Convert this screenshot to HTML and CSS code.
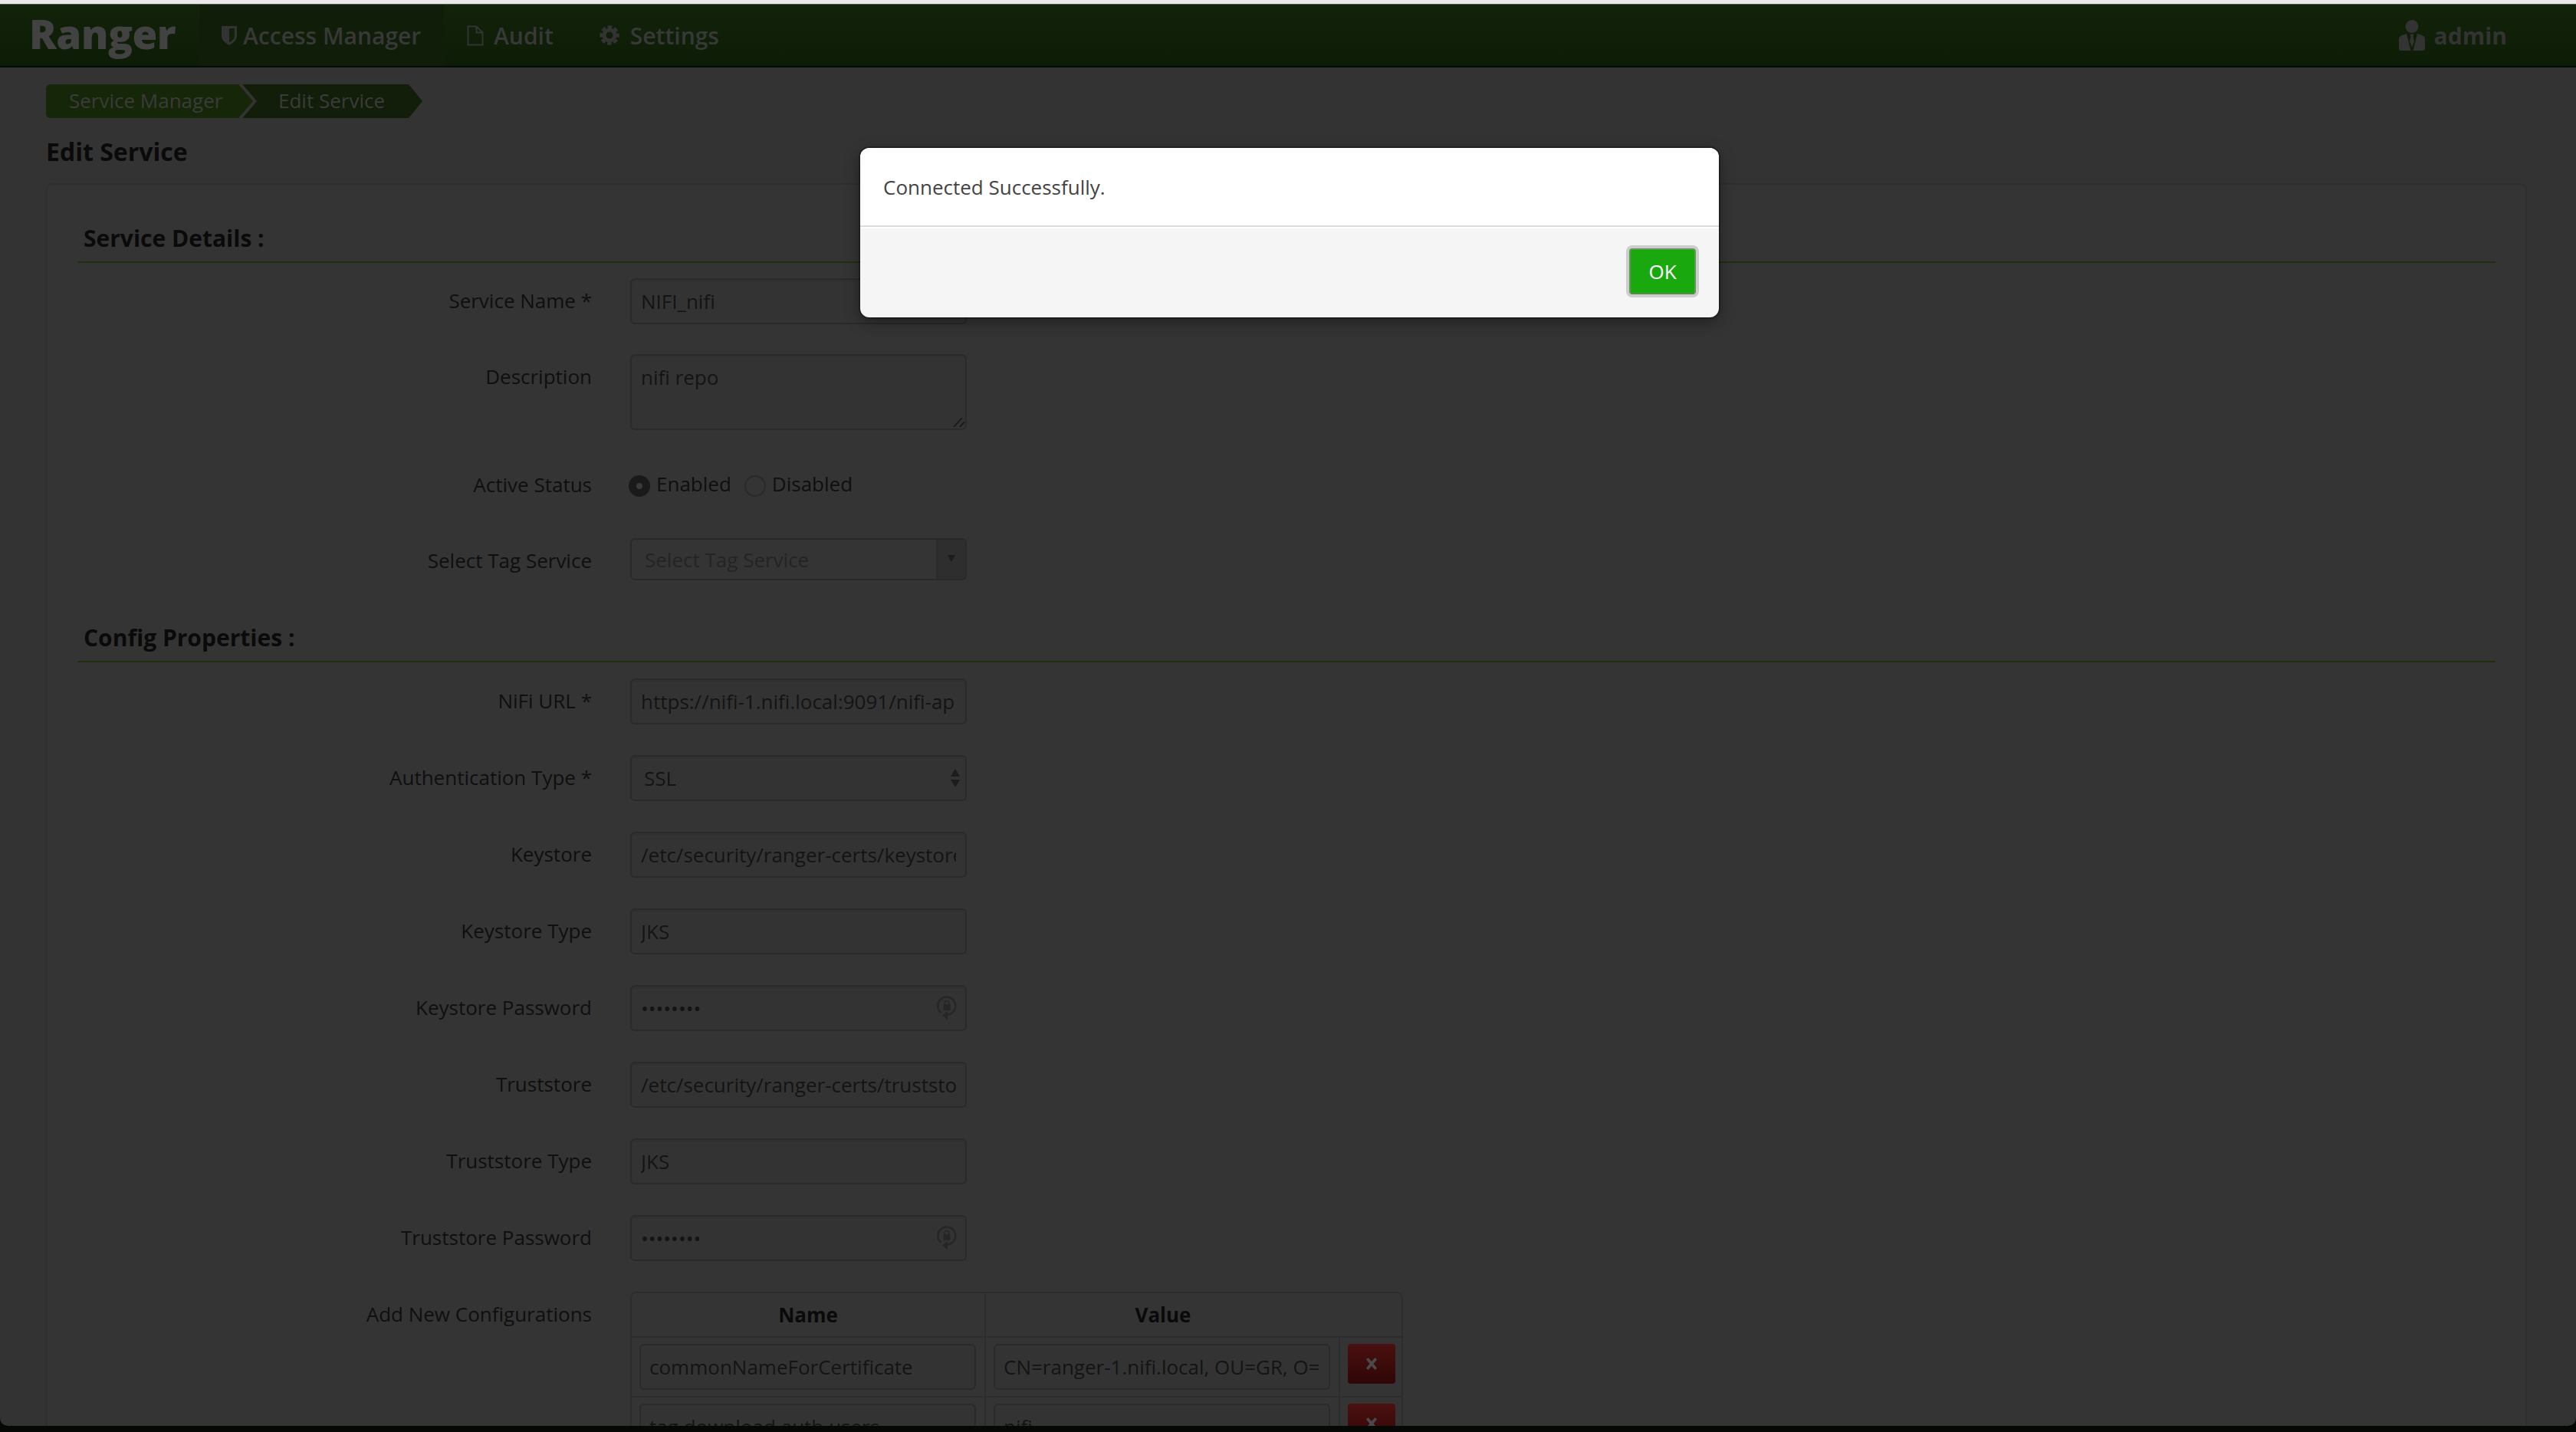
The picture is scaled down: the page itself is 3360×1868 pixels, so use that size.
FILE: index.html
```html
<!DOCTYPE html>
<html lang="en">
<head>
<meta charset="utf-8">
<title>Ranger - Edit Service</title>
<link rel="stylesheet" href="styles.css">
</head>
<body>
<div class="window">
  <div class="titlestrip"></div>
  <header class="navbar">
    <div class="brand">Ranger</div>
    <nav class="navlinks">
      <a class="navlink active">
        <svg class="ico-shield" viewBox="0 0 20 26"><path fill="#333" d="M0 1h20v13c0 6-6 9.500-10 12C6 23.500 0 20 0 14z"/><path fill="#11210a" d="M10 4h7v10c0 4-4 6.500-7 8.500z"/></svg>
        <span>Access Manager</span>
      </a>
      <a class="navlink">
        <svg class="ico-file" viewBox="0 0 22 27"><path fill="none" stroke="#333" stroke-width="2" d="M1.500 1.500h11l8 8v16h-19zM12.500 1.500v8h8"/></svg>
        <span>Audit</span>
      </a>
      <a class="navlink">
        <svg class="ico-cog" viewBox="0 0 26 26"><circle cx="13" cy="13" r="7" fill="none" stroke="#333" stroke-width="5"/><circle cx="13" cy="13" r="10.500" fill="none" stroke="#333" stroke-width="4.500" stroke-dasharray="5.500 2.750" stroke-dashoffset="2.750"/></svg>
        <span>Settings</span>
      </a>
    </nav>
    <div class="user">
      <svg class="ico-user" viewBox="0 0 34 41"><circle cx="17" cy="8.500" r="8.500" fill="#333"/><path fill="#333" d="M10 18 15.500 40H3c-2 0-3-1-3-3V24c0-3 6-5 10-6zM24 18 18.500 40H31c2 0 3-1 3-3V24c0-3-6-5-10-6zM14.500 18.500h5l-1 3 1.500 6.500-3 7.500-3-7.500 1.500-6.500z"/></svg>
      <span>admin</span>
    </div>
  </header>

  <main class="main">
    <div class="crumbs">
      <div class="crumb crumb-first">Service Manager</div>
      <div class="crumb crumb-last">Edit Service</div>
    </div>
    <h1 class="pagetitle">Edit Service</h1>

    <section class="panel">
      <h2 class="sectiontitle">Service Details :</h2>

      <div class="row row-name">
        <label class="fieldlabel">Service Name *</label>
        <input class="field" type="text" value="NIFI_nifi">
      </div>
      <div class="row row-desc">
        <label class="fieldlabel">Description</label>
        <div class="areawrap">
          <textarea class="field area">nifi repo</textarea>
          <svg class="ico-grip" viewBox="0 0 15 12"><path fill="none" stroke="#161616" stroke-width="1.500" d="M1 12 12 0M9 12 15 5"/></svg>
        </div>
      </div>
      <div class="row row-status">
        <label class="fieldlabel status-label">Active Status</label>
        <div class="radios">
          <span class="radio on"></span><span class="radiotext">Enabled</span>
          <span class="radio"></span><span class="radiotext">Disabled</span>
        </div>
      </div>
      <div class="row row-tag">
        <label class="fieldlabel">Select Tag Service</label>
        <div class="tagselect">
          <span class="tagtext">Select Tag Service</span>
          <span class="tagarrow"><svg class="ico-down" viewBox="0 0 10 10"><path fill="#1c1c1c" d="M0 1h10L5 10z"/></svg></span>
        </div>
      </div>

      <h2 class="sectiontitle second">Config Properties :</h2>

      <div class="row">
        <label class="fieldlabel">NiFi URL *</label>
        <input class="field" type="text" value="https://nifi-1.nifi.local:9091/nifi-api/resources">
      </div>
      <div class="row">
        <label class="fieldlabel">Authentication Type *</label>
        <div class="field authselect">
          <span>SSL</span>
          <svg class="ico-updown" viewBox="0 0 12 24"><path fill="#1c1c1c" d="M6 0l6 10H0zM0 14h12L6 24z"/></svg>
        </div>
      </div>
      <div class="row">
        <label class="fieldlabel">Keystore</label>
        <input class="field" type="text" value="/etc/security/ranger-certs/keystore.jks">
      </div>
      <div class="row">
        <label class="fieldlabel">Keystore Type</label>
        <input class="field" type="text" value="JKS">
      </div>
      <div class="row">
        <label class="fieldlabel">Keystore Password</label>
        <div class="pwdwrap">
          <input class="field pwd" type="password" value="password">
          <svg class="ico-key" viewBox="0 0 26 32"><path fill="none" stroke="#262626" stroke-width="2.500" d="M5.500 22A11.500 11.500 0 1 1 14 24.500"/><path fill="#262626" d="M14 20v11l-7-5.500z"/><path fill="none" stroke="#262626" stroke-width="1.500" d="M10 11V9.500a3 3 0 0 1 6 0V11"/><rect x="8.500" y="11" width="9" height="8" rx="1" fill="#262626"/></svg>
        </div>
      </div>
      <div class="row">
        <label class="fieldlabel">Truststore</label>
        <input class="field" type="text" value="/etc/security/ranger-certs/truststore.jks">
      </div>
      <div class="row">
        <label class="fieldlabel">Truststore Type</label>
        <input class="field" type="text" value="JKS">
      </div>
      <div class="row">
        <label class="fieldlabel">Truststore Password</label>
        <div class="pwdwrap">
          <input class="field pwd" type="password" value="password">
          <svg class="ico-key" viewBox="0 0 26 32"><path fill="none" stroke="#262626" stroke-width="2.500" d="M5.500 22A11.500 11.500 0 1 1 14 24.500"/><path fill="#262626" d="M14 20v11l-7-5.500z"/><path fill="none" stroke="#262626" stroke-width="1.500" d="M10 11V9.500a3 3 0 0 1 6 0V11"/><rect x="8.500" y="11" width="9" height="8" rx="1" fill="#262626"/></svg>
        </div>
      </div>
      <div class="row">
        <label class="fieldlabel">Add New Configurations</label>
        <table class="configs">
          <thead>
            <tr><th class="colname">Name</th><th class="colvalue">Value</th><th class="colaction"></th></tr>
          </thead>
          <tbody>
            <tr>
              <td><input class="cellfield" type="text" value="commonNameForCertificate"></td>
              <td><input class="cellfield" type="text" value="CN=ranger-1.nifi.local, OU=GR, O=Hortonworks"></td>
              <td class="actioncell"><button class="remove"><svg class="ico-x" viewBox="0 0 14 16"><path fill="#4a4a4a" d="M0 2.500 2.500 0 7 5l4.500-5L14 2.500 9.500 8l4.500 5.500-2.500 2.500L7 11l-4.500 5L0 13.500 4.500 8z"/></svg></button></td>
            </tr>
            <tr>
              <td><input class="cellfield" type="text" value="tag.download.auth.users"></td>
              <td><input class="cellfield" type="text" value="nifi"></td>
              <td class="actioncell"><button class="remove"><svg class="ico-x" viewBox="0 0 14 16"><path fill="#4a4a4a" d="M0 2.500 2.500 0 7 5l4.500-5L14 2.500 9.500 8l4.500 5.500-2.500 2.500L7 11l-4.500 5L0 13.500 4.500 8z"/></svg></button></td>
            </tr>
          </tbody>
        </table>
      </div>
    </section>
  </main>

  <div class="modal">
    <div class="modalbody">Connected Successfully.</div>
    <div class="modalfoot"><button class="okbtn">OK</button></div>
  </div>
</div>
</body>
</html>
```

FILE: styles.css
```css
* { box-sizing: border-box; }

html, body {
  margin: 0;
  height: 1868px;
  overflow: hidden;
  background: #050805;
}

body {
  font-family: "Open Sans", "Liberation Sans", sans-serif;
  font-size: 26px;
  color: #0f0f0f;
}

.window {
  position: relative;
  height: 1860px;
  overflow: hidden;
  background: #333;
  border-radius: 0 0 10px 10px;
}

.titlestrip {
  height: 6px;
  background: #e9e9e9;
  border-bottom: 1px solid #555;
}

/* navbar */
.navbar {
  display: flex;
  align-items: stretch;
  height: 82px;
  background: linear-gradient(#12230a, #0d1c06);
  border-bottom: 2px solid #050a02;
  color: #333;
}

.brand {
  width: 260px;
  padding-left: 38px;
  font-size: 53px;
  font-weight: 800;
  line-height: 76px;
  letter-spacing: -0.5px;
  color: #424242;
}

.navlinks {
  display: flex;
  flex: 1;
}

.navlink {
  display: flex;
  align-items: center;
  padding: 0 30px;
  font-size: 30px;
  font-weight: 600;
  color: #383838;
}

.navlink.active {
  width: 319px;
  padding: 0 0 0 29px;
  background: #101e09;
}

.ico-shield { width: 20px; height: 26px; margin-right: 8px; }
.ico-file { width: 22px; height: 27px; margin-right: 13px; }
.ico-cog { width: 26px; height: 26px; margin-right: 14px; }

.user {
  display: flex;
  align-items: center;
  gap: 12px;
  padding-right: 90px;
  font-size: 30px;
  font-weight: 700;
  color: #333;
}

.ico-user { width: 34px; height: 41px; }

/* breadcrumb */
.main {
  padding: 22px 64px 0 60px;
}

.crumbs {
  display: flex;
  height: 44px;
  color: #3b3b3b;
  line-height: 42px;
}

.crumb-first {
  width: 270px;
  padding-left: 30px;
  background: #162608;
  border-radius: 6px 0 0 6px;
  clip-path: polygon(0 0, 251px 0, 270px 22px, 251px 44px, 0 44px);
}

.crumb-last {
  width: 235px;
  margin-left: -14px;
  padding-left: 47px;
  background: #121e0a;
  clip-path: polygon(0 0, 217px 0, 235px 22px, 217px 44px, 0 44px, 19px 22px);
}

.pagetitle {
  margin: 24px 0 21px;
  font-size: 32px;
  font-weight: 700;
  line-height: 40px;
  color: #0a0a0a;
}

/* panel */
.panel {
  height: 1700px;
  padding: 50px 39px 0;
  border: 2px solid #2f2f2f;
  border-radius: 8px;
  background: #343434;
}

.sectiontitle {
  margin: 0 0 20px;
  padding: 0 8px 10px;
  border-bottom: 2px solid #1f300f;
  font-size: 30px;
  font-weight: 700;
  line-height: 40px;
  color: #0a0a0a;
}

.sectiontitle.second {
  margin-bottom: 21px;
}

.row {
  display: flex;
  margin-bottom: 40px;
}

.row-name { margin-bottom: 39px; }
.row-desc { margin-bottom: 59px; }
.row-status { height: 28px; margin-bottom: 54px; }
.row-tag { margin-bottom: 55px; }

.fieldlabel {
  flex: none;
  width: 671px;
  margin-right: 50px;
  padding-top: 9px;
  line-height: 40px;
  text-align: right;
}

.status-label {
  padding-top: 0;
  margin-top: -8px;
}

.field {
  display: block;
  width: 439px;
  height: 60px;
  padding: 0 12px;
  border: 2px solid #2a2a2a;
  border-radius: 6px;
  background: #333;
  box-shadow: inset 0 2px 2px rgba(0, 0, 0, 0.06);
  font-family: inherit;
  font-size: 26px;
  color: #141414;
  outline: none;
}

.areawrap {
  position: relative;
  width: 439px;
  height: 99px;
}

.area {
  height: 99px;
  padding: 8px 12px;
  line-height: 40px;
  resize: none;
}

.ico-grip {
  position: absolute;
  right: 3px;
  bottom: 4px;
  width: 15px;
  height: 12px;
}

.radios {
  display: flex;
  align-items: flex-start;
  margin-left: -2px;
  height: 28px;
  line-height: 22px;
}

.radio {
  flex: none;
  width: 28px;
  height: 28px;
  margin-right: 8px;
  border: 2px solid #2a2a2a;
  border-radius: 50%;
}

.radio.on {
  border: 10px solid #1a1a1a;
  background: #3a3a3a;
}

.radiotext {
  margin-right: 17px;
}

.tagselect {
  display: flex;
  width: 439px;
  height: 55px;
  border: 2px solid #292929;
  border-radius: 6px;
  color: #242424;
}

.tagtext {
  flex: 1;
  padding-left: 17px;
  line-height: 53px;
}

.tagarrow {
  display: flex;
  align-items: center;
  justify-content: center;
  width: 38px;
  border-left: 2px solid #2a2a2a;
  background: #2e2e2e;
  border-radius: 0 4px 4px 0;
}

.ico-down { width: 10px; height: 10px; margin-top: -4px; }

.authselect {
  display: flex;
  align-items: center;
  justify-content: space-between;
  padding: 0 7px 0 16px;
}

.ico-updown { width: 12px; height: 24px; }

.pwdwrap {
  position: relative;
  width: 439px;
  height: 60px;
}

.pwd {
  padding-right: 48px;
}

.ico-key {
  position: absolute;
  top: 14px;
  right: 13px;
  width: 26px;
  height: 32px;
}

/* config table */
.configs {
  width: 1008px;
  height: 200px;
  table-layout: fixed;
  border-collapse: separate;
  border-spacing: 0;
  border: 2px solid #2d2d2d;
  border-radius: 8px;
}

.configs th {
  height: 58px;
  padding: 0;
  border-bottom: 2px solid #2d2d2d;
  font-size: 26px;
  font-weight: 700;
  color: #0a0a0a;
}

.colname { width: 462px; border-right: 2px solid #2d2d2d; }
.colvalue { width: 462px; }
.colaction { width: 80px; }

.configs td {
  padding: 8px 11px 8px 10px;
  border-right: 2px solid #2d2d2d;
  border-bottom: 2px solid #2d2d2d;
  vertical-align: top;
}

.configs td.actioncell {
  padding: 8px 0 0 10px;
  border-right: 0;
}

.cellfield {
  display: block;
  width: 439px;
  height: 60px;
  padding: 0 11px;
  border: 2px solid #2a2a2a;
  border-radius: 6px;
  background: #333;
  font-family: inherit;
  font-size: 26px;
  color: #141414;
  outline: none;
}

.remove {
  display: flex;
  align-items: center;
  justify-content: center;
  width: 62px;
  height: 52px;
  padding: 0;
  border: 0;
  border-radius: 4px;
  background: linear-gradient(#4b1010, #2f0606);
}

.ico-x { width: 14px; height: 16px; }

/* modal */
.modal {
  position: absolute;
  left: 1122px;
  top: 193px;
  width: 1120px;
  height: 221px;
  overflow: hidden;
  border-radius: 12px;
  background: #f5f5f5;
  box-shadow: 0 0 0 2px rgba(0, 0, 0, 0.25), 0 6px 20px rgba(0, 0, 0, 0.4);
}

.modalbody {
  height: 103px;
  padding: 31px 30px 0;
  border-bottom: 2px solid #ddd;
  background: #fff;
  line-height: 40px;
  color: #444;
}

.modalfoot {
  display: flex;
  justify-content: flex-end;
  align-items: flex-start;
  padding: 26px 30px 0 0;
  border-top: 2px solid #fff;
}

.okbtn {
  width: 87px;
  height: 60px;
  padding: 0;
  border: 2px solid #5b9b52;
  border-bottom-color: #4d8f44;
  border-radius: 4px;
  background: #1aa80f;
  box-shadow: 0 0 0 4px rgba(0, 0, 0, 0.16);
  font-family: inherit;
  font-size: 26px;
  color: #fff;
}
```
